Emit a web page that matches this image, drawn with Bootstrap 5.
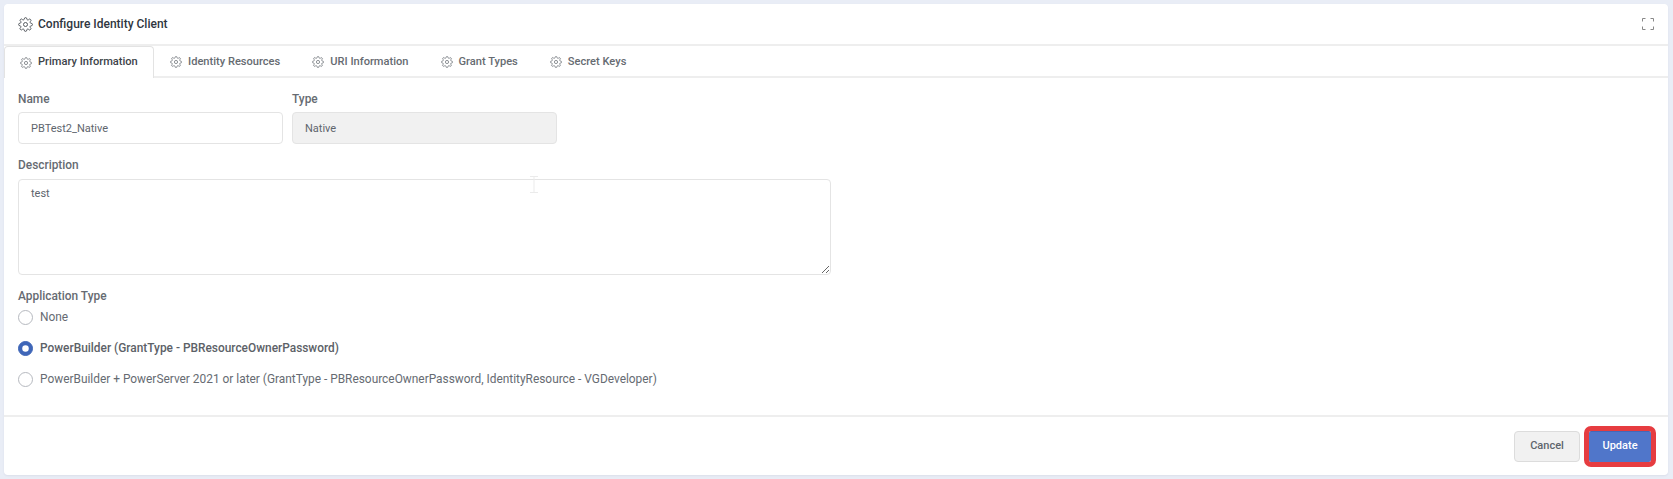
<!DOCTYPE html>
<html lang="en">
<head>
<meta charset="utf-8">
<title>Configure Identity Client</title>
<link rel="stylesheet" href="https://cdn.jsdelivr.net/npm/bootstrap@5.3.0/dist/css/bootstrap.min.css">
<style>
html,body{height:100%;}
body{background:#e9edf6;font-family:Roboto,"Liberation Sans",sans-serif;font-size:12px;color:#555e68;padding:4px 5px 4px 4px;overflow:hidden;}
.shell{height:471px;border:0;border-radius:4px;background:#fff;box-shadow:0 1px 2px rgba(60,70,100,.08);}
.shell-head{height:42px;padding:0 14px;background:#fff;border-bottom:2px solid #eeeeee;border-radius:4px 4px 0 0;}
.shell-title{font-size:12px;font-weight:500;color:#2f3640;margin-left:5px;}
.gear{display:block;flex:none;fill:none;stroke:#6b7075;stroke-width:1.5;}
.gear-lg{width:15px;height:15px;stroke:#4d5258;}
.gear-sm{width:12px;height:12px;}
.expand{width:12px;height:12px;fill:none;stroke:#888;stroke-width:1;}
.tabs-bar{height:32px;padding:0;border-bottom:2px solid #eeeeee;flex-wrap:nowrap;}
.tabs-bar .nav-link{height:32px;padding:0 16px;margin:0;font-size:11.1px;font-weight:500;color:#666b71;border:0;border-radius:4px 4px 0 0;display:flex;align-items:center;gap:6px;white-space:nowrap;}
.tabs-bar .nav-link.active{color:#3d4349;background:#fff;border:1px solid #e3e3e3;border-bottom:0;height:32px;margin-bottom:-2px;padding:0 15px;width:150px;}
.pane{padding:14px 14px 0;}
.pane .form-label{font-size:11.9px;font-weight:500;color:#666b72;margin-bottom:6px;line-height:14px;}
.pane .form-control{font-size:11px;color:#5e656d;border:1px solid #e4e4e4;border-radius:4px;box-shadow:none;padding:0 12px;}
.field-short{width:265px;height:32px;}
.pane .form-control:disabled{background:#f1f1f1;opacity:1;}
.fields-top{gap:9px;margin-bottom:14px;}
.field-long{width:813px;height:96px;padding-top:6px !important;resize:vertical;display:block;}
.block-desc{margin-bottom:14px;}
.block-desc .form-label{margin-bottom:7px;}
.desc-wrap{width:813px;}
.ibeam{left:512px;top:-3px;width:8px;height:17px;fill:none;stroke:#ebebeb;stroke-width:1;pointer-events:none;}
.pane .form-check{min-height:0;height:15px;padding-left:0;margin:0;display:flex;align-items:center;gap:7px;}
.pane .form-check + .form-check{margin-top:16px;}
.pane .form-check-input{float:none;width:15px;height:15px;margin:0;border:1px solid #b6b9bf;flex:none;}
.pane .form-check-input:checked{background-color:#3f66b8;border-color:#3f66b8;}
.pane .form-check-label{font-size:11.9px;color:#666b72;line-height:15px;}
.radios{margin-top:7px;}
.pane .form-check-input:checked + .form-check-label{font-weight:500;color:#5c6167;}
.shell-foot{height:60px;background:#fff;border-top:2px solid #eeeeee;padding:0 17px 0 0;gap:9px;border-radius:0 0 4px 4px;}
.btn-cancel{width:66px;height:31px;padding:0;font-size:11px;font-weight:500;color:#5e656d;background:#f1f1f1;border:1px solid #dcdcdc;border-radius:4px;}
.btn-update{width:62px;height:31px;padding:0;font-size:11px;font-weight:500;color:#fff;background:#5076ca;border:0;border-top:1px solid #4468b8;border-radius:2px;outline:5px solid #e63c40;outline-offset:0;}
</style>
</head>
<body>
<svg width="0" height="0" class="d-block" aria-hidden="true">
<defs>
<symbol id="cog" viewBox="0 0 24 24">
<circle cx="12" cy="12" r="3.2"/>
<path d="M19.4 15a1.7 1.7 0 0 0 .3 1.9l.1.1a2 2 0 1 1-2.8 2.8l-.1-.1a1.7 1.7 0 0 0-1.9-.3 1.7 1.7 0 0 0-1 1.5V21a2 2 0 1 1-4 0v-.1a1.7 1.7 0 0 0-1.100-1.500 1.700 1.700 0 0 0-1.900.3l-.1.1a2 2 0 1 1-2.800-2.800l.1-.1a1.700 1.700 0 0 0 .3-1.900 1.700 1.700 0 0 0-1.500-1H3a2 2 0 1 1 0-4h.1a1.700 1.700 0 0 0 1.500-1.100 1.700 1.700 0 0 0-.3-1.900l-.1-.1a2 2 0 1 1 2.800-2.800l.1.1a1.700 1.700 0 0 0 1.900.3h.1a1.700 1.700 0 0 0 1-1.500V3a2 2 0 1 1 4 0v.1a1.700 1.700 0 0 0 1 1.500 1.700 1.700 0 0 0 1.900-.3l.1-.1a2 2 0 1 1 2.800 2.800l-.1.1a1.700 1.700 0 0 0-.3 1.900v.1a1.700 1.700 0 0 0 1.500 1h.1a2 2 0 1 1 0 4h-.1a1.700 1.700 0 0 0-1.500 1z"/>
</symbol>
</defs>
</svg>
<div class="card shell d-flex flex-column">
  <div class="card-header shell-head d-flex align-items-center">
    <svg class="gear gear-lg"><use href="#cog"/></svg>
    <span class="shell-title">Configure Identity Client</span>
    <svg class="expand ms-auto" viewBox="0 0 12 12"><path d="M.5 3.500V.5h3M8.500.5h3v3M11.500 8.500v3h-3M3.500 11.500h-3v-3"/></svg>
  </div>
  <ul class="nav nav-tabs tabs-bar">
    <li class="nav-item"><a class="nav-link active" href="#"><svg class="gear gear-sm"><use href="#cog"/></svg>Primary Information</a></li>
    <li class="nav-item"><a class="nav-link" href="#"><svg class="gear gear-sm"><use href="#cog"/></svg>Identity Resources</a></li>
    <li class="nav-item"><a class="nav-link" href="#"><svg class="gear gear-sm"><use href="#cog"/></svg>URI Information</a></li>
    <li class="nav-item"><a class="nav-link" href="#"><svg class="gear gear-sm"><use href="#cog"/></svg>Grant Types</a></li>
    <li class="nav-item"><a class="nav-link" href="#"><svg class="gear gear-sm"><use href="#cog"/></svg>Secret Keys</a></li>
  </ul>
  <form class="pane flex-grow-1">
    <div class="d-flex fields-top">
      <div>
        <label class="form-label d-block" for="f-name">Name</label>
        <input id="f-name" class="form-control field-short" value="PBTest2_Native">
      </div>
      <div>
        <label class="form-label d-block" for="f-type">Type</label>
        <input id="f-type" class="form-control field-short" value="Native" disabled>
      </div>
    </div>
    <div class="block-desc">
      <label class="form-label d-block" for="f-desc">Description</label>
      <div class="desc-wrap position-relative">
        <textarea id="f-desc" class="form-control field-long">test</textarea>
        <svg class="ibeam position-absolute" viewBox="0 0 8 17"><path d="M0 .5h8M4 .5v16M0 16.500h8"/></svg>
      </div>
    </div>
    <div class="form-label mb-0">Application Type</div>
    <div class="radios">
      <div class="form-check"><input class="form-check-input" type="radio" name="apptype" id="r1"><label class="form-check-label" for="r1">None</label></div>
      <div class="form-check"><input class="form-check-input" type="radio" name="apptype" id="r2" checked><label class="form-check-label" for="r2">PowerBuilder (GrantType - PBResourceOwnerPassword)</label></div>
      <div class="form-check"><input class="form-check-input" type="radio" name="apptype" id="r3"><label class="form-check-label" for="r3">PowerBuilder + PowerServer 2021 or later (GrantType - PBResourceOwnerPassword, IdentityResource - VGDeveloper)</label></div>
    </div>
  </form>
  <div class="card-footer shell-foot d-flex align-items-center justify-content-end">
    <button type="button" class="btn btn-cancel">Cancel</button>
    <button type="button" class="btn btn-update">Update</button>
  </div>
</div>
<script src="https://cdn.jsdelivr.net/npm/bootstrap@5.3.0/dist/js/bootstrap.bundle.min.js"></script>
</body>
</html>
